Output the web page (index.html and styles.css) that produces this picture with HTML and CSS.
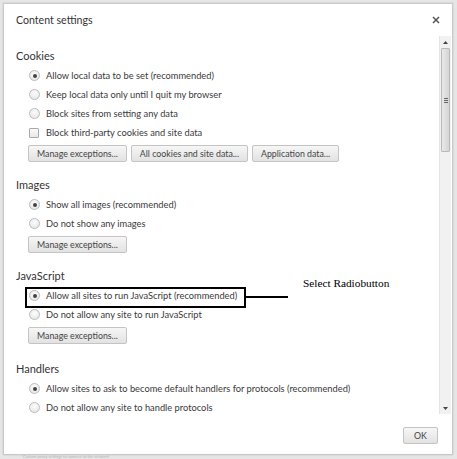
FILE: index.html
```html
<!DOCTYPE html>
<html>
<head>
<meta charset="utf-8">
<title>Content settings</title>
<link rel="stylesheet" href="styles.css">
</head>
<body>
<div class="screen">
  <div class="dialog">
    <div class="dialog-header">
      <span class="title">Content settings</span>
      <svg class="close" width="8" height="8" viewBox="0 0 8 8"><path d="M1.5 1.5L6.5 6.5M6.5 1.5L1.5 6.5" stroke="#555" stroke-width="1.5" stroke-linecap="square"/></svg>
    </div>
    <div class="dialog-body">
      <div class="scroll-content">
        <section class="section">
          <h2 class="heading">Cookies</h2>
          <div class="option"><span class="radio checked"></span><span class="label">Allow local data to be set (recommended)</span></div>
          <div class="option"><span class="radio"></span><span class="label">Keep local data only until I quit my browser</span></div>
          <div class="option"><span class="radio"></span><span class="label">Block sites from setting any data</span></div>
          <div class="option"><span class="checkbox"></span><span class="label">Block third-party cookies and site data</span></div>
          <div class="buttons">
            <button class="btn">Manage exceptions...</button>
            <button class="btn">All cookies and site data...</button>
            <button class="btn">Application data...</button>
          </div>
        </section>
        <section class="section">
          <h2 class="heading">Images</h2>
          <div class="option"><span class="radio checked"></span><span class="label">Show all images (recommended)</span></div>
          <div class="option"><span class="radio"></span><span class="label">Do not show any images</span></div>
          <div class="buttons">
            <button class="btn">Manage exceptions...</button>
          </div>
        </section>
        <section class="section">
          <h2 class="heading">JavaScript</h2>
          <div class="option annotated">
            <span class="radio checked"></span><span class="label">Allow all sites to run JavaScript (recommended)</span>
            <span class="callout-box"></span>
            <span class="callout-line"></span>
            <span class="callout-text">Select Radiobutton</span>
          </div>
          <div class="option"><span class="radio"></span><span class="label">Do not allow any site to run JavaScript</span></div>
          <div class="buttons">
            <button class="btn">Manage exceptions...</button>
          </div>
        </section>
        <section class="section section-last">
          <h2 class="heading">Handlers</h2>
          <div class="option"><span class="radio checked"></span><span class="label">Allow sites to ask to become default handlers for protocols (recommended)</span></div>
          <div class="option"><span class="radio"></span><span class="label">Do not allow any site to handle protocols</span></div>
        </section>
      </div>
      <div class="scrollbar">
        <div class="sb-arrow"><svg width="5" height="3" viewBox="0 0 5 3"><path d="M0 3L2.5 0L5 3Z" fill="#444"/></svg></div>
        <div class="sb-thumb"><span class="grip"></span></div>
        <div class="sb-track"></div>
        <div class="sb-arrow"><svg width="5" height="3" viewBox="0 0 5 3"><path d="M0 0L5 0L2.5 3Z" fill="#444"/></svg></div>
      </div>
    </div>
    <div class="dialog-footer">
      <button class="btn btn-ok">OK</button>
    </div>
  </div>
  <div class="backdrop-text">Custom proxy settings to connect to the network</div>
</div>
</body>
</html>
```

FILE: styles.css
```css
html, body {
  margin: 0;
  padding: 0;
}
body {
  width: 457px;
  height: 459px;
  overflow: hidden;
  background: #e6e6e6;
  font-family: Lato, "Liberation Sans", sans-serif;
  color: #333;
}
.screen {
  padding: 3px 4px 0 3px;
}
.dialog {
  height: 450px;
  background: #fff;
  border: 1px solid #c9c9c9;
  box-shadow: 0 0 2px rgba(0,0,0,0.15);
  display: flex;
  flex-direction: column;
}
.dialog-header {
  height: 32px;
  flex: none;
  display: flex;
  align-items: center;
  justify-content: space-between;
  padding: 0 12px 0 12px;
}
.title {
  font-size: 10.6px;
  color: #333;
}
.close {
  display: block;
}
.dialog-body {
  height: 378px;
  flex: none;
  display: flex;
}
.scroll-content {
  flex: 1;
  overflow: hidden;
  padding: 10px 0 0 12px;
}
.section + .section {
  margin-top: 13px;
}
.section-last {
  padding-top: 2px;
}
.heading {
  margin: 0;
  font-weight: normal;
  font-size: 11px;
  line-height: 20px;
  color: #333;
}
.option {
  height: 19px;
  display: flex;
  align-items: center;
  padding-left: 13px;
  font-size: 9.3px;
  color: #3a3a3a;
  white-space: nowrap;
}
.radio {
  width: 9px;
  height: 9px;
  flex: none;
  border-radius: 50%;
  border: 1px solid #bcbcbc;
  background: radial-gradient(circle at 50% 35%, #fdfdfd 0%, #e2e2e2 100%);
  margin-right: 6px;
  position: relative;
}
.radio.checked::after {
  content: "";
  position: absolute;
  left: 2.5px;
  top: 2.5px;
  width: 4px;
  height: 4px;
  border-radius: 50%;
  background: #444;
}
.checkbox {
  width: 8px;
  height: 8px;
  flex: none;
  border: 1px solid #aaa;
  border-radius: 1px;
  background: linear-gradient(#fafafa, #e8e8e8);
  margin-right: 7px;
}
.buttons {
  display: flex;
  gap: 4px;
  margin-top: 3px;
  padding-left: 12px;
}
.btn {
  height: 17px;
  margin: 0;
  padding: 0 8px;
  font-family: Lato, "Liberation Sans", sans-serif;
  font-size: 8.8px;
  color: #444;
  background: linear-gradient(#f6f6f6, #e2e2e2);
  border: 1px solid #c4c4c4;
  border-radius: 2px;
  line-height: 15px;
}
.annotated {
  position: relative;
}
.callout-box {
  position: absolute;
  left: 9px;
  top: 1px;
  width: 221px;
  height: 21px;
  box-sizing: border-box;
  border: 2px solid #000;
}
.callout-line {
  position: absolute;
  left: 230px;
  top: 10px;
  width: 42px;
  height: 2px;
  background: #000;
}
.callout-text {
  position: absolute;
  left: 287px;
  top: -10px;
  line-height: 14px;
  font-family: "Liberation Serif", serif;
  font-size: 11.3px;
  color: #000;
}
.scrollbar {
  width: 11px;
  flex: none;
  margin-right: 1px;
  display: flex;
  flex-direction: column;
  background: #f1f1f1;
  border-left: 1px solid #e4e4e4;
}
.sb-arrow {
  height: 12px;
  flex: none;
  display: flex;
  align-items: center;
  justify-content: center;
}
.sb-thumb {
  height: 104px;
  flex: none;
  margin: 0 1px;
  box-sizing: border-box;
  border: 1px solid #b9b9b9;
  border-radius: 1px;
  background: linear-gradient(90deg, #e9e9e9, #d4d4d4);
  display: flex;
  align-items: center;
  justify-content: center;
}
.grip {
  width: 4px;
  height: 5px;
  background: repeating-linear-gradient(#666 0 1px, transparent 1px 2px);
}
.sb-track {
  flex: 1;
}
.dialog-footer {
  height: 40px;
  flex: none;
  display: flex;
  justify-content: flex-end;
  align-items: flex-start;
  padding: 13px 14px 0 0;
  box-sizing: border-box;
}
.btn-ok {
  width: 35px;
  padding: 0;
}
.backdrop-text {
  padding-left: 20px;
  font-size: 4px;
  line-height: 4px;
  color: #b5b5b5;
}
```
